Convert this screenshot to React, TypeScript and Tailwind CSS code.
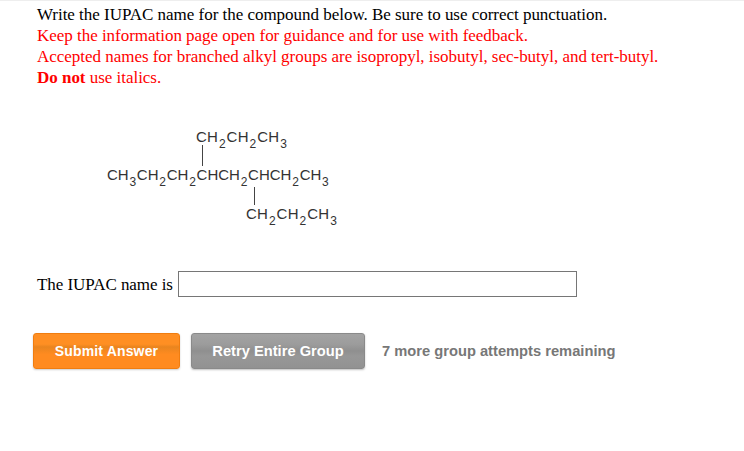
const Sub = ({ children }: { children: string }) => (
  <sub className="mx-[0.75px] text-[12px] leading-none align-[-3px]">{children}</sub>
);

const App = () => {
  return (
    <div className="h-[451px] w-[744px] overflow-hidden border-t border-[#eeeeee] bg-white font-['Liberation_Serif',serif] text-[17px]">
      <div className="pl-[37px] pt-[3px] leading-[21px] tracking-[-0.025px]">
        <div className="text-black">Write the IUPAC name for the compound below. Be sure to use correct punctuation.</div>
        <div className="text-[#ff0000]">Keep the information page open for guidance and for use with feedback.</div>
        <div className="text-[#ff0000]">Accepted names for branched alkyl groups are isopropyl, isobutyl, sec-butyl, and tert-butyl.</div>
        <div className="text-[#ff0000]">
          <b>Do not</b> use italics.
        </div>
      </div>

      <div className="relative ml-[107px] mt-[39px] h-[100px] w-[240px] font-['Liberation_Sans',sans-serif] text-[15px] leading-[20px] text-[#333333]">
        <div className="h-[20px] pl-[89px] tracking-[0.25px]">
          CH<Sub>2</Sub>CH<Sub>2</Sub>CH<Sub>3</Sub>
        </div>
        <div className="mt-[18px] h-[20px]">
          CH<Sub>3</Sub>CH<Sub>2</Sub>CH<Sub>2</Sub>CHCH<Sub>2</Sub>CHCH<Sub>2</Sub>CH<Sub>3</Sub>
        </div>
        <div className="mt-[19px] h-[20px] pl-[139px] tracking-[0.25px]">
          CH<Sub>2</Sub>CH<Sub>2</Sub>CH<Sub>3</Sub>
        </div>
        <div className="absolute left-[95px] top-[18px] h-[21px] w-px bg-[#444444]" />
        <div className="absolute left-[147px] top-[60px] h-[18px] w-px bg-[#444444]" />
      </div>

      <div className="ml-[37px] mt-[44px] flex items-center gap-[5px] text-black">
        <span className="relative top-px tracking-[-0.05px]">The IUPAC name is</span>
        <input type="text" className="h-[26px] w-[399px] border border-[#767676] bg-white outline-none" />
      </div>

      <div className="ml-[33px] mt-[36px] flex items-center font-['Liberation_Sans',sans-serif] text-[14.7px] font-bold">
        <button className="h-[36px] w-[147px] rounded-[3px] border border-[#f07d10] bg-[linear-gradient(#ff8f23_0%,#ff8f23_30%,#e9851f_38%,#ff8b20_60%,#ff8b20_100%)] text-[14px] tracking-[0.15px] text-white shadow-[0_1px_2px_rgba(0,0,0,0.2)]">
          Submit Answer
        </button>
        <button className="ml-[11px] h-[36px] w-[174px] rounded-[3px] border border-[#8a8a8a] bg-[linear-gradient(#a3a3a3_0%,#9c9c9c_30%,#8f8f8f_50%,#979797_65%,#929292_100%)] text-white shadow-[0_1px_2px_rgba(0,0,0,0.25)]">
          Retry Entire Group
        </button>
        <span className="ml-[17px] text-[#777777]">7 more group attempts remaining</span>
      </div>
    </div>
  );
};

export default App;
